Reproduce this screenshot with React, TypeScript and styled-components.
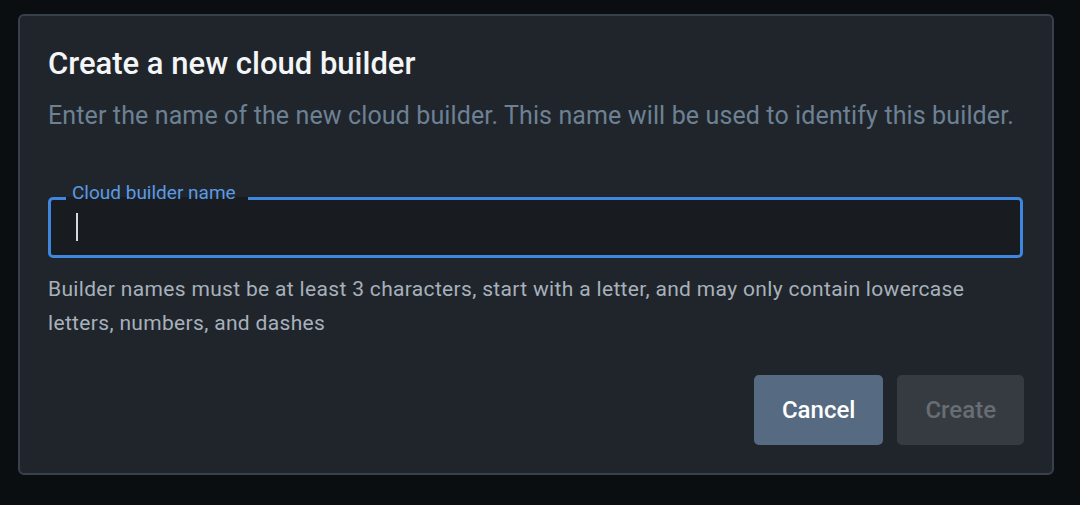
import React from 'react';
import styled, { createGlobalStyle } from 'styled-components';

const GlobalStyle = createGlobalStyle`
  html, body {
    margin: 0;
    padding: 0;
    background: #0b0e11;
    font-family: Roboto, "Liberation Sans", Arial, sans-serif;
  }
`;

const Backdrop = styled.div`
  width: 1080px;
  height: 505px;
  padding: 14px 0 0 18px;
  box-sizing: border-box;
`;

const Dialog = styled.div`
  width: 1036px;
  box-sizing: border-box;
  background: #20252b;
  border: 2px solid #36414c;
  border-radius: 6px;
  padding: 29px 28px 28px 28px;
  display: flex;
  flex-direction: column;
`;

const Title = styled.h2`
  margin: 0;
  font-size: 31px;
  line-height: 38px;
  font-weight: 500;
  color: #f3f5f7;
`;

const Subtitle = styled.p`
  margin: 18px 0 0;
  font-size: 25px;
  line-height: 30px;
  font-weight: 400;
  letter-spacing: 0.12px;
  color: #6d8194;
  white-space: nowrap;
`;

const Field = styled.fieldset<{ $focused?: boolean }>`
  margin: 51px 1px 0 0;
  padding: 0;
  min-width: 0;
  height: 76px;
  box-sizing: border-box;
  background: #181c20;
  border: 3px solid ${(p) => (p.$focused ? '#3f86de' : '#3a4550')};
  border-radius: 5px;
`;

const Legend = styled.legend`
  margin-left: 15px;
  padding: 0 12px 11px 6px;
  font-size: 19px;
  line-height: 22px;
  color: #5b9be3;
`;

const Caret = styled.span`
  display: block;
  width: 2px;
  height: 28px;
  margin: -2px 0 0 25px;
  background: #d6d8da;
`;

const Helper = styled.p`
  margin: 14px 0 0;
  font-size: 21px;
  line-height: 34px;
  letter-spacing: 0.33px;
  color: #a7b1bb;
`;

const Actions = styled.div`
  display: flex;
  justify-content: flex-end;
  gap: 14px;
  margin-top: 35px;
`;

const Button = styled.button<{ $variant: 'secondary' | 'disabled' }>`
  height: 70px;
  padding: 0 28px;
  border: none;
  border-radius: 5px;
  font-family: inherit;
  font-size: 24px;
  font-weight: 500;
  background: ${(p) => (p.$variant === 'secondary' ? '#566a81' : '#363b42')};
  color: ${(p) => (p.$variant === 'secondary' ? '#ffffff' : '#686d73')};
  cursor: ${(p) => (p.$variant === 'disabled' ? 'default' : 'pointer')};
`;

export default function App() {
  return (
    <>
      <GlobalStyle />
      <Backdrop>
        <Dialog>
          <Title>Create a new cloud builder</Title>
          <Subtitle>
            Enter the name of the new cloud builder. This name will be used to identify this builder.
          </Subtitle>
          <Field $focused>
            <Legend>Cloud builder name</Legend>
            <Caret />
          </Field>
          <Helper>
            Builder names must be at least 3 characters, start with a letter, and may only contain
            lowercase letters, numbers, and dashes
          </Helper>
          <Actions>
            <Button $variant="secondary">Cancel</Button>
            <Button $variant="disabled" disabled>
              Create
            </Button>
          </Actions>
        </Dialog>
      </Backdrop>
    </>
  );
}
